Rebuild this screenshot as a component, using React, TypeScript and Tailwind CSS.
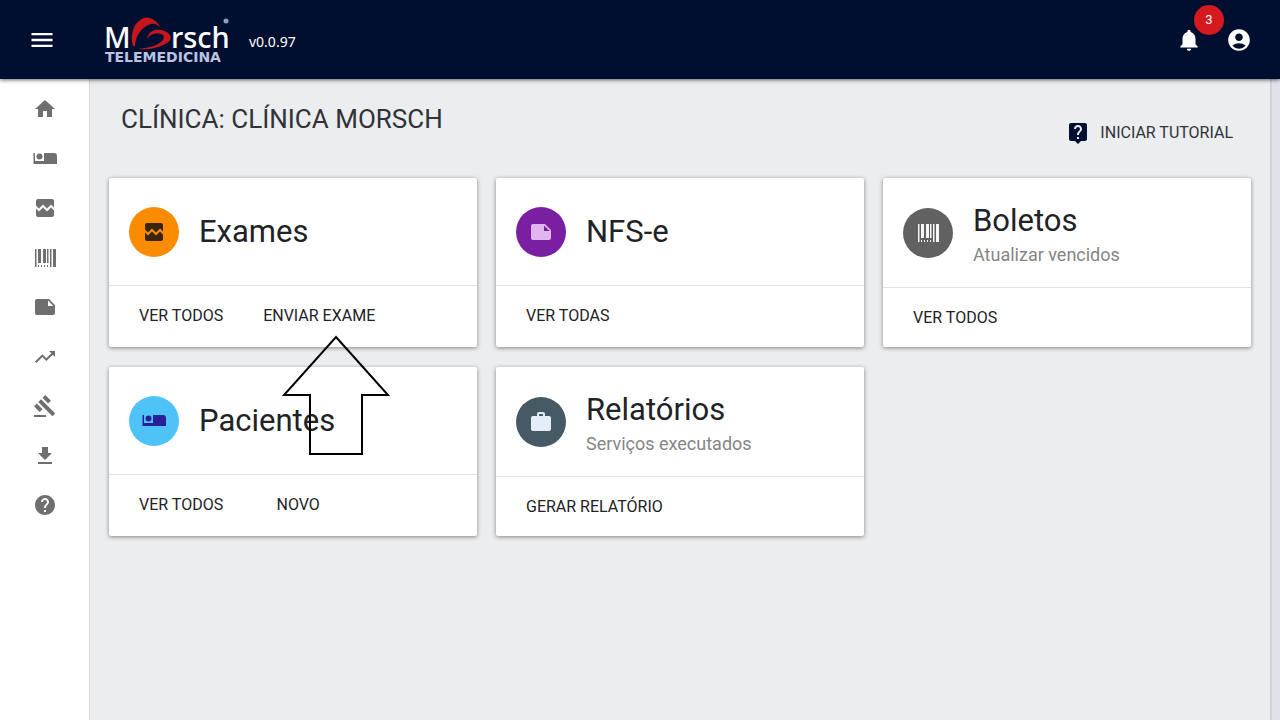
import React from 'react';
import {
    MdAccountCircle,
    MdBrokenImage,
    MdFileDownload,
    MdGavel,
    MdHelp,
    MdHome,
    MdLiveHelp,
    MdMenu,
    MdNote,
    MdNotifications,
    MdTrendingUp,
    MdWork,
} from 'react-icons/md';

type IconProps = { className?: string };

// Bed with a pillow, seen from the side
const BedIcon: React.FC<IconProps> = ({ className = '' }) => (
    <svg viewBox="0 0 24 24" fill="currentColor" className={className} aria-hidden="true">
        <path d="M.5 6H2v8h9V6h10a3 3 0 0 1 3 3v8H.5z" />
        <circle cx="6.500" cy="9.500" r="3" />
    </svg>
);

// Barcode with the short bars broken near the bottom
const BarcodeIcon: React.FC<IconProps> = ({ className = '' }) => (
    <svg viewBox="0 0 24 24" fill="currentColor" className={className} aria-hidden="true">
        <path d="M2 3h1.500v18H2zM5 3h3v14H5zM10 3h3v14h-3zM14 3h1.500v14H14zM17 3h1.500v18H17zM20 3h3v18h-3zM5 19h1v2H5zM8 19h1v2H8zM11 19h1v2h-1zM14 19h1v2h-1z" />
    </svg>
);

// Brand wordmark
const Logo: React.FC = () => (
    <svg viewBox="0 0 128 54" className="h-[54px] w-32" role="img" aria-label="Morsch Telemedicina">
        <text x="0" y="35" fill="#ffffff" fontFamily="'Noto Sans', sans-serif" fontWeight="500" fontSize="29">M</text>
        <text x="67" y="35" fill="#ffffff" fontFamily="'Noto Sans', sans-serif" fontWeight="500" fontSize="29">rsch</text>
        <path
            d="M29 33C26 24 29 12 35 8c5-5 11-4 15-1 3 2 5 4 6 7-3-3-6-4-9-3-8 2-16 11-16 22z"
            fill="#c4161c"
        />
        <path
            d="M43 26c1-5 4-8 8-9 6-1 12 1 15 5 2 4 0 7-5 9C54 35 44 37 34 36c10-1 19-3 24-8 3-3 2-6-1-7-5-2-11 0-14 5z"
            fill="#c4161c"
        />
        <circle cx="122" cy="8" r="2.500" fill="#8f9bb8" />
        <text x="1" y="49" fill="#b9c4e0" fontFamily="'DejaVu Sans', sans-serif" fontWeight="bold" fontSize="14">TELEMEDICINA</text>
    </svg>
);

const navItems = [
    { label: 'Início', icon: MdHome },
    { label: 'Pacientes', icon: BedIcon },
    { label: 'Exames', icon: MdBrokenImage },
    { label: 'Boletos', icon: BarcodeIcon },
    { label: 'NFS-e', icon: MdNote },
    { label: 'Relatórios', icon: MdTrendingUp },
    { label: 'Laudos', icon: MdGavel },
    { label: 'Downloads', icon: MdFileDownload },
    { label: 'Ajuda', icon: MdHelp },
];

const cards = [
    { title: 'Exames', icon: MdBrokenImage, color: 'bg-[#fb8c00] text-[#3a2410]', actions: ['VER TODOS', 'ENVIAR EXAME'] },
    { title: 'NFS-e', icon: MdNote, color: 'bg-[#7b1fa2] text-[#e1b5ee]', actions: ['VER TODAS'] },
    { title: 'Boletos', subtitle: 'Atualizar vencidos', icon: BarcodeIcon, color: 'bg-[#616161] text-[#f5f5f5]', actions: ['VER TODOS'] },
    { title: 'Pacientes', icon: BedIcon, color: 'bg-[#4fc3f7] text-[#28209a]', actions: ['VER TODOS', 'NOVO'] },
    { title: 'Relatórios', subtitle: 'Serviços executados', icon: MdWork, color: 'bg-[#455a64] text-[#e3eefa]', actions: ['GERAR RELATÓRIO'] },
];

// Top bar
const Header: React.FC = () => (
    <header className="relative z-10 flex h-[79px] items-center justify-between bg-[#000f30] px-7 text-white shadow-[0_1px_4px_rgba(0,0,0,0.6)]">
        <div className="flex items-center">
            <button type="button" aria-label="Menu">
                <MdMenu className="size-7" />
            </button>
            <div className="ml-12 flex items-center gap-[17px]">
                <Logo />
                <span className="pt-1 font-['Noto_Sans',sans-serif] text-sm">v0.0.97</span>
            </div>
        </div>
        <div className="flex items-center gap-6">
            <button type="button" aria-label="Notificações" className="relative">
                <MdNotifications className="size-[26px]" />
                <span className="absolute -top-[22px] left-[18px] flex size-[30px] items-center justify-center rounded-full bg-[#d41a1f] text-[13px]">
                    3
                </span>
            </button>
            <button type="button" aria-label="Conta">
                <MdAccountCircle className="size-[26px]" />
            </button>
        </div>
    </header>
);

// Icon rail on the left
const Sidebar: React.FC = () => (
    <nav className="w-[90px] shrink-0 border-r border-[#d5d8dc] bg-white pt-[18px] text-[#6f6f70]">
        <div className="flex h-[420px] flex-col items-center justify-between">
            {navItems.map(({ label, icon: Icon }) => (
                <a key={label} href="#" aria-label={label}>
                    <Icon className="size-6" />
                </a>
            ))}
        </div>
    </nav>
);

const DashboardCard: React.FC<(typeof cards)[number]> = ({ title, subtitle, icon: Icon, color, actions }) => (
    <section className="rounded-xs bg-white shadow-[0_1px_4px_rgba(0,0,0,0.45)]">
        <div className={`flex items-center gap-5 border-b border-[#dfe2e8] px-5 ${subtitle ? 'h-[110px]' : 'h-[108px]'}`}>
            <div className={`flex size-[50px] shrink-0 items-center justify-center rounded-full ${color}`}>
                <Icon className="size-6" />
            </div>
            <div className={subtitle ? 'pt-1' : ''}>
                <h2 className="text-[31px] leading-10 text-[#212226]">{title}</h2>
                {subtitle && <p className="text-lg leading-7 text-[#858585]">{subtitle}</p>}
            </div>
        </div>
        <div className="flex h-[59px] items-center pl-[10px]">
            {actions.map((action) => (
                <button key={action} type="button" className="h-10 min-w-[110px] px-5 text-base text-[#212226]">
                    {action}
                </button>
            ))}
        </div>
    </section>
);

const App: React.FC = () => (
    <div className="flex min-h-screen flex-col bg-[#ebedef] font-[Roboto,sans-serif]">
        <Header />
        <div className="flex flex-1">
            <Sidebar />
            <main className="relative flex-1 px-[19px]">
                <div className="flex h-[99px] items-start justify-between">
                    <h1 className="px-3 pt-5 text-[26px] leading-10 text-[#303238]">CLÍNICA: CLÍNICA MORSCH</h1>
                    <button type="button" className="mt-8 mr-[18px] flex h-11 items-center gap-[10px] text-base text-[#303238]">
                        <MdLiveHelp className="size-6 text-[#000f30]" />
                        INICIAR TUTORIAL
                    </button>
                </div>
                <div className="grid grid-cols-3 gap-x-[19px] gap-y-5">
                    {cards.map((card) => (
                        <DashboardCard key={card.title} {...card} />
                    ))}
                </div>
                {/* Pointer to the "send exam" action */}
                <svg
                    viewBox="0 0 108 122"
                    className="pointer-events-none absolute top-[256px] left-[192px] h-[122px] w-[108px]"
                    fill="none"
                    stroke="#000000"
                    strokeWidth="2"
                    aria-hidden="true"
                >
                    <path d="M54 2 106 60H80V119H28V60H2z" />
                </svg>
            </main>
            <div className="w-[10px] shrink-0 border-l-2 border-[#cfd2d9] bg-[#dfe2e8]" />
        </div>
    </div>
);

export default App;
